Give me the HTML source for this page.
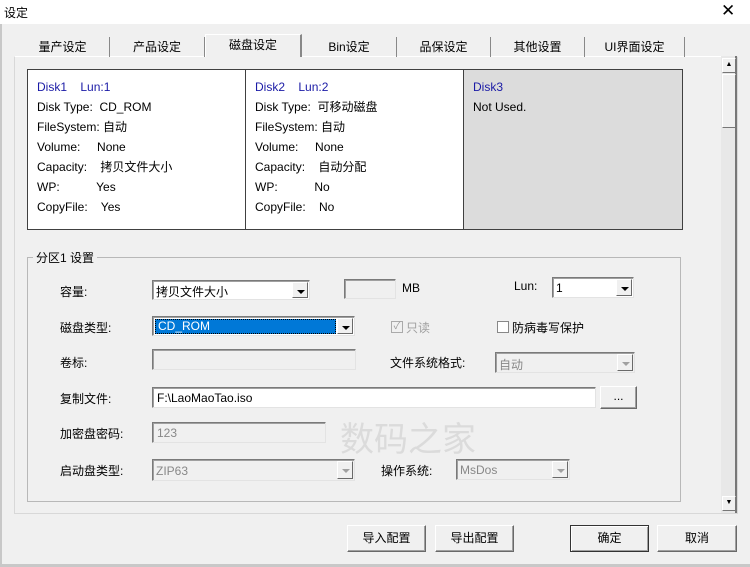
<!DOCTYPE html><html><head><meta charset="utf-8"><style>
*{box-sizing:border-box;margin:0;padding:0}
body{width:750px;height:567px;background:#f0f0f0;font-family:"Liberation Sans","Noto Sans CJK SC",sans-serif;font-size:12px;color:#000;position:relative;overflow:hidden}
.a{position:absolute;white-space:nowrap}
.tab{position:absolute;top:37px;height:20px;text-align:center;line-height:20px;font-size:12px;border-right:1px solid #888}
.box{position:absolute;background:#fff;border:1px solid #7a7a7a;border-right-color:#e3e3e3;border-bottom-color:#e3e3e3;box-shadow:inset 1px 1px 0 #a0a0a0}
.dis{background:#f0f0f0}
.arr{position:absolute;right:1px;top:1px;bottom:1px;width:16px;background:#f0f0f0;border:1px solid;border-color:#fff #696969 #696969 #fff}
.arr:after{content:"";position:absolute;left:4px;top:7px;border-left:4px solid transparent;border-right:4px solid transparent;border-top:4px solid #000}
.arr.g:after{border-top-color:#a0a0a0}
.btn{position:absolute;height:27px;background:#f0f0f0;border:1px solid;border-color:#fff #696969 #696969 #fff;box-shadow:inset -1px -1px 0 #a0a0a0;text-align:center;line-height:25px;font-size:12px}
.t{font-size:12px;position:absolute}
.cb{position:absolute;width:12px;height:12px;border:1px solid #888;background:#fff}
</style></head><body>
<div class="a" style="left:0;top:0;width:750px;height:24px;background:#fff"></div>
<div class="a" style="left:4px;top:4px">设定</div>
<div class="a" style="left:721px;top:1px;font-size:17px">✕</div>
<div class="a" style="left:0;top:24px;width:2px;height:543px;background:#c8c8c8"></div>
<div class="a" style="left:14px;top:56px;width:724px;height:458px;border:1px solid #d8d8d8;border-top-color:#fff"></div>
<div class="tab" style="left:16px;width:94px">量产设定</div>
<div class="tab" style="left:110px;width:95px">产品设定</div>
<div class="tab" style="left:205px;top:34px;width:97px;background:#f0f0f0;border:1px solid #fff;border-right:2px solid #888;border-bottom:none;height:23px;line-height:20px">磁盘设定</div>
<div class="tab" style="left:302px;width:95px">Bin设定</div>
<div class="tab" style="left:397px;width:94px">品保设定</div>
<div class="tab" style="left:491px;width:94px">其他设置</div>
<div class="tab" style="left:585px;width:100px">UI界面设定</div>
<div class="a" style="left:721px;top:56px;width:16px;height:457px;background:#e8e8e8;border-right:2px solid #777"></div>
<div class="a" style="left:722px;top:58px;width:14px;height:15px;background:#f0f0f0;border:1px solid;border-color:#fff #777 #777 #fff;font-size:7px;text-align:center;line-height:12px">▲</div>
<div class="a" style="left:722px;top:74px;width:14px;height:54px;background:#f0f0f0;border:1px solid;border-color:#fff #777 #777 #fff"></div>
<div class="a" style="left:722px;top:496px;width:14px;height:15px;background:#f0f0f0;border:1px solid;border-color:#fff #777 #777 #fff;font-size:7px;text-align:center;line-height:12px">▼</div>
<div class="a" style="left:27px;top:69px;width:656px;height:161px;background:#fff;border:1px solid #404040"></div>
<div class="a" style="left:463px;top:70px;width:219px;height:159px;background:#dcdcdc;border-left:1px solid #404040"></div>
<div class="a" style="left:245px;top:70px;width:1px;height:159px;background:#404040"></div>
<div class="a" style="left:37px;top:77px;line-height:20px"><span style="color:#1a1aa6">Disk1&nbsp;&nbsp;&nbsp; Lun:1</span><br>Disk Type:&nbsp; CD_ROM<br>FileSystem: 自动<br>Volume:&nbsp;&nbsp;&nbsp;&nbsp; None<br>Capacity:&nbsp;&nbsp;&nbsp; 拷贝文件大小<br>WP:&nbsp;&nbsp;&nbsp;&nbsp;&nbsp;&nbsp;&nbsp;&nbsp;&nbsp;&nbsp; Yes<br>CopyFile:&nbsp;&nbsp;&nbsp; Yes</div>
<div class="a" style="left:255px;top:77px;line-height:20px"><span style="color:#1a1aa6">Disk2&nbsp;&nbsp;&nbsp; Lun:2</span><br>Disk Type:&nbsp; 可移动磁盘<br>FileSystem: 自动<br>Volume:&nbsp;&nbsp;&nbsp;&nbsp; None<br>Capacity:&nbsp;&nbsp;&nbsp; 自动分配<br>WP:&nbsp;&nbsp;&nbsp;&nbsp;&nbsp;&nbsp;&nbsp;&nbsp;&nbsp;&nbsp; No<br>CopyFile:&nbsp;&nbsp;&nbsp; No</div>
<div class="a" style="left:473px;top:77px;line-height:20px"><span style="color:#1a1aa6">Disk3</span><br>Not Used.</div>
<div class="a" style="left:27px;top:257px;width:654px;height:245px;border:1px solid #b8b8b8"></div>
<div class="a" style="left:33px;top:249px;background:#f0f0f0;padding:0 3px">分区1 设置</div>
<div class="a" style="left:60px;top:283px">容量:</div>
<div class="box" style="left:152px;top:280px;width:158px;height:20px"><span class="t" style="left:3px;top:2px">拷贝文件大小</span><div class="arr"></div></div>
<div class="box dis" style="left:344px;top:279px;width:52px;height:20px"></div>
<div class="a" style="left:402px;top:281px">MB</div>
<div class="a" style="left:514px;top:279px">Lun:</div>
<div class="box" style="left:552px;top:277px;width:82px;height:21px"><span class="t" style="left:3px;top:3px">1</span><div class="arr"></div></div>
<div class="a" style="left:60px;top:319px">磁盘类型:</div>
<div class="box" style="left:152px;top:316px;width:203px;height:20px"><div class="a" style="left:2px;top:2px;width:181px;height:15px;background:#0078d7;border:1px dotted #000;color:#fff;line-height:13px;padding-left:2px">CD_ROM</div><div class="arr"></div></div>
<div class="cb" style="left:391px;top:321px;border-color:#aaa;background:#f0f0f0;font-size:10px;line-height:10px;color:#999;text-align:center">✓</div>
<div class="a" style="left:406px;top:319px;color:#a0a0a0">只读</div>
<div class="cb" style="left:497px;top:321px"></div>
<div class="a" style="left:512px;top:319px">防病毒写保护</div>
<div class="a" style="left:60px;top:354px">卷标:</div>
<div class="box dis" style="left:152px;top:349px;width:204px;height:21px"></div>
<div class="a" style="left:390px;top:354px">文件系统格式:</div>
<div class="box dis" style="left:495px;top:352px;width:140px;height:21px"><span class="t" style="left:3px;top:3px;color:#888">自动</span><div class="arr g"></div></div>
<div class="a" style="left:60px;top:390px">复制文件:</div>
<div class="box" style="left:152px;top:387px;width:444px;height:21px"><span class="t" style="left:4px;top:3px">F:\LaoMaoTao.iso</span></div>
<div class="btn" style="left:600px;top:386px;width:37px;height:23px;line-height:18px">...</div>
<div class="a" style="left:60px;top:425px">加密盘密码:</div>
<div class="box dis" style="left:152px;top:422px;width:174px;height:21px"><span class="t" style="left:4px;top:3px;color:#888">123</span></div>
<div class="a" style="left:60px;top:462px">启动盘类型:</div>
<div class="box dis" style="left:152px;top:459px;width:203px;height:22px"><span class="t" style="left:3px;top:4px;color:#888">ZIP63</span><div class="arr g"></div></div>
<div class="a" style="left:381px;top:462px">操作系统:</div>
<div class="box dis" style="left:456px;top:459px;width:114px;height:21px"><span class="t" style="left:3px;top:3px;color:#888">MsDos</span><div class="arr g"></div></div>
<div class="a" style="left:340px;top:412px;font-size:34px;color:rgba(180,180,180,.35)">数码之家</div>
<div class="btn" style="left:347px;top:525px;width:79px">导入配置</div>
<div class="btn" style="left:435px;top:525px;width:79px">导出配置</div>
<div class="btn" style="left:570px;top:525px;width:79px;border:1px solid #333;box-shadow:inset 1px 1px 0 #fff,inset -1px -1px 0 #a0a0a0">确定</div>
<div class="btn" style="left:657px;top:525px;width:80px">取消</div>
<div class="a" style="left:0;top:564px;width:750px;height:3px;background:#c8c8c8"></div>
</body></html>
